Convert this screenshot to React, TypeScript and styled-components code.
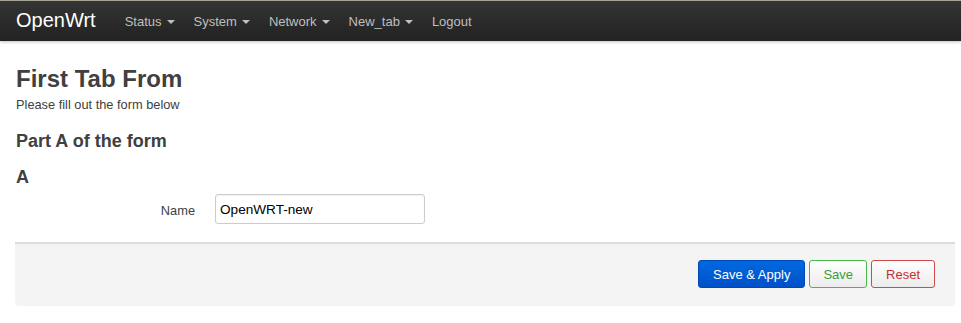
import styled, { createGlobalStyle } from 'styled-components';

const GlobalStyle = createGlobalStyle`
  html, body {
    margin: 0;
    padding: 0;
    background: #fff;
    font-family: "Liberation Sans", Arial, sans-serif;
    font-size: 13px;
    color: #404040;
  }
  * { box-sizing: border-box; }
`;

const NavBar = styled.header`
  height: 41px;
  display: flex;
  align-items: center;
  padding: 0 16px;
  border-top: 1px solid #a8a290;
  background: linear-gradient(to bottom, #343434, #222222);
  box-shadow: 0 1px 3px rgba(0, 0, 0, 0.25);
`;

const Brand = styled.a`
  color: #fff;
  font-size: 20px;
  margin-right: 29px;
  margin-top: -1px;
`;

const NavMenu = styled.nav`
  display: flex;
  gap: 19px;
`;

const NavItem = styled.span`
  color: #bfbfbf;
  font-size: 13px;
  display: flex;
  align-items: center;
  gap: 5px;
`;

const Caret = styled.span`
  width: 0;
  height: 0;
  border-left: 4px solid transparent;
  border-right: 4px solid transparent;
  border-top: 4px solid #bfbfbf;
  margin-top: 1px;
`;

const Main = styled.main`
  padding: 0 6px 0 15px;
`;

const Title = styled.h2`
  margin: 24px 0 0 1px;
  font-size: 24px;
  font-weight: bold;
  line-height: 28px;
  color: #404040;
`;

const Description = styled.div`
  margin: 4px 0 0 1px;
  font-size: 12.8px;
  line-height: 16px;
  color: #404040;
`;

const SectionTitle = styled.h3<{ $gap: number }>`
  margin: ${({ $gap }) => $gap}px 0 0 1px;
  font-size: 18px;
  font-weight: bold;
  line-height: 22px;
`;

const FieldRow = styled.div`
  display: flex;
  align-items: center;
  margin-top: 6px;
  gap: 20px;
`;

const Label = styled.label`
  width: 180px;
  text-align: right;
  font-size: 12.8px;
  color: #404040;
  margin-top: 2px;
`;

const Input = styled.input`
  width: 210px;
  height: 30px;
  border: 1px solid #ccc;
  border-radius: 3px;
  padding: 0 5px 0 4px;
  font-family: inherit;
  font-size: 13.6px;
  color: #000;
  box-shadow: inset 0 1px 2px rgba(0, 0, 0, 0.06);
`;

const Actions = styled.div`
  margin-top: 18px;
  border-top: 2px solid #dddddd;
  background: #f4f4f4;
  border-radius: 0 0 4px 4px;
  height: 64px;
  display: flex;
  justify-content: flex-end;
  align-items: flex-start;
  padding: 16px 20px 0 0;
  gap: 4px;
`;

const Button = styled.button<{ $tone: 'primary' | 'positive' | 'reset' }>`
  height: 28px;
  font-family: inherit;
  font-size: 13px;
  border-radius: 3px;
  cursor: pointer;
  ${({ $tone }) =>
    $tone === 'primary'
      ? `
    background: linear-gradient(to bottom, #0069e0, #0050c8);
    border: 1px solid #0048b8;
    color: #fff;
    padding: 0 14px;
  `
      : $tone === 'positive'
        ? `
    background: linear-gradient(to bottom, #ffffff, #ececec);
    border: 1px solid #4ab74a;
    color: #3a9e3a;
    padding: 0 13px;
  `
        : `
    background: linear-gradient(to bottom, #ffffff, #ececec);
    border: 1px solid #d04a4a;
    color: #c83030;
    padding: 0 14px;
  `}
`;

const menu = ['Status', 'System', 'Network', 'New_tab'];

export default function App() {
  return (
    <>
      <GlobalStyle />
      <NavBar>
        <Brand>OpenWrt</Brand>
        <NavMenu>
          {menu.map((m) => (
            <NavItem key={m}>
              {m}
              <Caret />
            </NavItem>
          ))}
          <NavItem>Logout</NavItem>
        </NavMenu>
      </NavBar>
      <Main>
        <Title>First Tab From</Title>
        <Description>Please fill out the form below</Description>
        <SectionTitle $gap={17}>Part A of the form</SectionTitle>
        <SectionTitle $gap={14}>A</SectionTitle>
        <FieldRow>
          <Label>Name</Label>
          <Input defaultValue="OpenWRT-new" />
        </FieldRow>
        <Actions>
          <Button $tone="primary">Save &amp; Apply</Button>
          <Button $tone="positive">Save</Button>
          <Button $tone="reset">Reset</Button>
        </Actions>
      </Main>
    </>
  );
}
